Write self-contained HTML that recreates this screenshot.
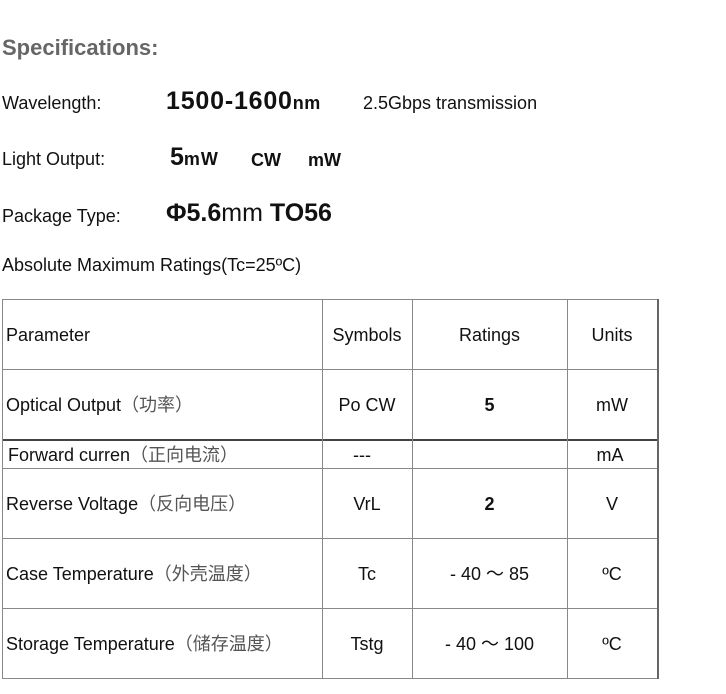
<!DOCTYPE html>
<html><head><meta charset="utf-8"><style>
body{margin:0;width:726px;height:694px;background:#fff;position:relative;font-family:"Liberation Sans","Noto Sans CJK SC",sans-serif;color:#111;overflow:hidden}
.a{position:absolute;white-space:nowrap}
.t{font-size:18px}
.b{font-weight:bold}
.h{position:absolute;background:#888;height:1px}
.v{position:absolute;background:#888;width:1px}
.c{position:absolute;font-size:18px;text-align:center;white-space:nowrap;line-height:20px}
.cj{color:#555}
</style></head><body>
<div class="a b" style="left:2px;top:35px;font-size:22px;color:#666">Specifications:</div>
<div class="a t" style="left:2px;top:93px">Wavelength:</div>
<div class="a b" style="left:166px;top:87px;font-size:25px;letter-spacing:0.8px">1500-1600<span style="font-size:18px;letter-spacing:0.5px">nm</span></div>
<div class="a" style="left:363px;top:93px;font-size:18px">2.5Gbps transmission</div>
<div class="a t" style="left:2px;top:149px">Light Output:</div>
<div class="a b" style="left:170px;top:143px;font-size:25px">5<span style="font-size:18px;letter-spacing:1px">mW</span></div>
<div class="a b" style="left:251px;top:150px;font-size:18px">CW</div>
<div class="a b" style="left:308px;top:150px;font-size:18px">mW</div>
<div class="a t" style="left:2px;top:206px">Package Type:</div>
<div class="a" style="left:166px;top:199px;font-size:25px"><b>Φ5.6</b>mm <b>TO56</b></div>
<div class="a t" style="left:2px;top:255px">Absolute Maximum Ratings(Tc=25ºC)</div>

<div class="h" style="left:2px;top:299px;width:656px"></div>
<div class="h" style="left:2px;top:369px;width:656px"></div>
<div class="h" style="left:2px;top:439px;width:656px;height:2px;background:#444"></div>
<div class="h" style="left:2px;top:468px;width:656px"></div>
<div class="h" style="left:2px;top:538px;width:656px"></div>
<div class="h" style="left:2px;top:608px;width:656px"></div>
<div class="h" style="left:2px;top:678px;width:656px"></div>
<div class="v" style="left:2px;top:299px;height:380px"></div>
<div class="v" style="left:322px;top:299px;height:380px"></div>
<div class="v" style="left:412px;top:299px;height:380px"></div>
<div class="v" style="left:567px;top:299px;height:380px"></div>
<div class="v" style="left:657px;top:299px;height:380px;width:2px;background:#666"></div>

<div class="c" style="left:6px;top:325px">Parameter</div>
<div class="c" style="left:322px;width:90px;top:325px">Symbols</div>
<div class="c" style="left:412px;width:155px;top:325px">Ratings</div>
<div class="c" style="left:567px;width:90px;top:325px">Units</div>

<div class="c" style="left:6px;top:395px">Optical Output<span class="cj">（功率）</span></div>
<div class="c" style="left:322px;width:90px;top:395px">Po CW</div>
<div class="c b" style="left:412px;width:155px;top:395px">5</div>
<div class="c" style="left:567px;width:90px;top:395px">mW</div>

<div class="c" style="left:8px;top:445px">Forward curren<span class="cj">（正向电流）</span></div>
<div class="c" style="left:322px;width:80px;top:445px">---</div>
<div class="c" style="left:567px;width:86px;top:445px">mA</div>

<div class="c" style="left:6px;top:494px">Reverse Voltage<span class="cj">（反向电压）</span></div>
<div class="c" style="left:322px;width:90px;top:494px">VrL</div>
<div class="c b" style="left:412px;width:155px;top:494px">2</div>
<div class="c" style="left:567px;width:90px;top:494px">V</div>

<div class="c" style="left:6px;top:564px">Case Temperature<span class="cj">（外壳温度）</span></div>
<div class="c" style="left:322px;width:90px;top:564px">Tc</div>
<div class="c" style="left:412px;width:155px;top:564px">- 40 ～ 85</div>
<div class="c" style="left:567px;width:90px;top:564px">ºC</div>

<div class="c" style="left:6px;top:634px">Storage Temperature<span class="cj">（储存温度）</span></div>
<div class="c" style="left:322px;width:90px;top:634px">Tstg</div>
<div class="c" style="left:412px;width:155px;top:634px">- 40 ～ 100</div>
<div class="c" style="left:567px;width:90px;top:634px">ºC</div>
</body></html>
